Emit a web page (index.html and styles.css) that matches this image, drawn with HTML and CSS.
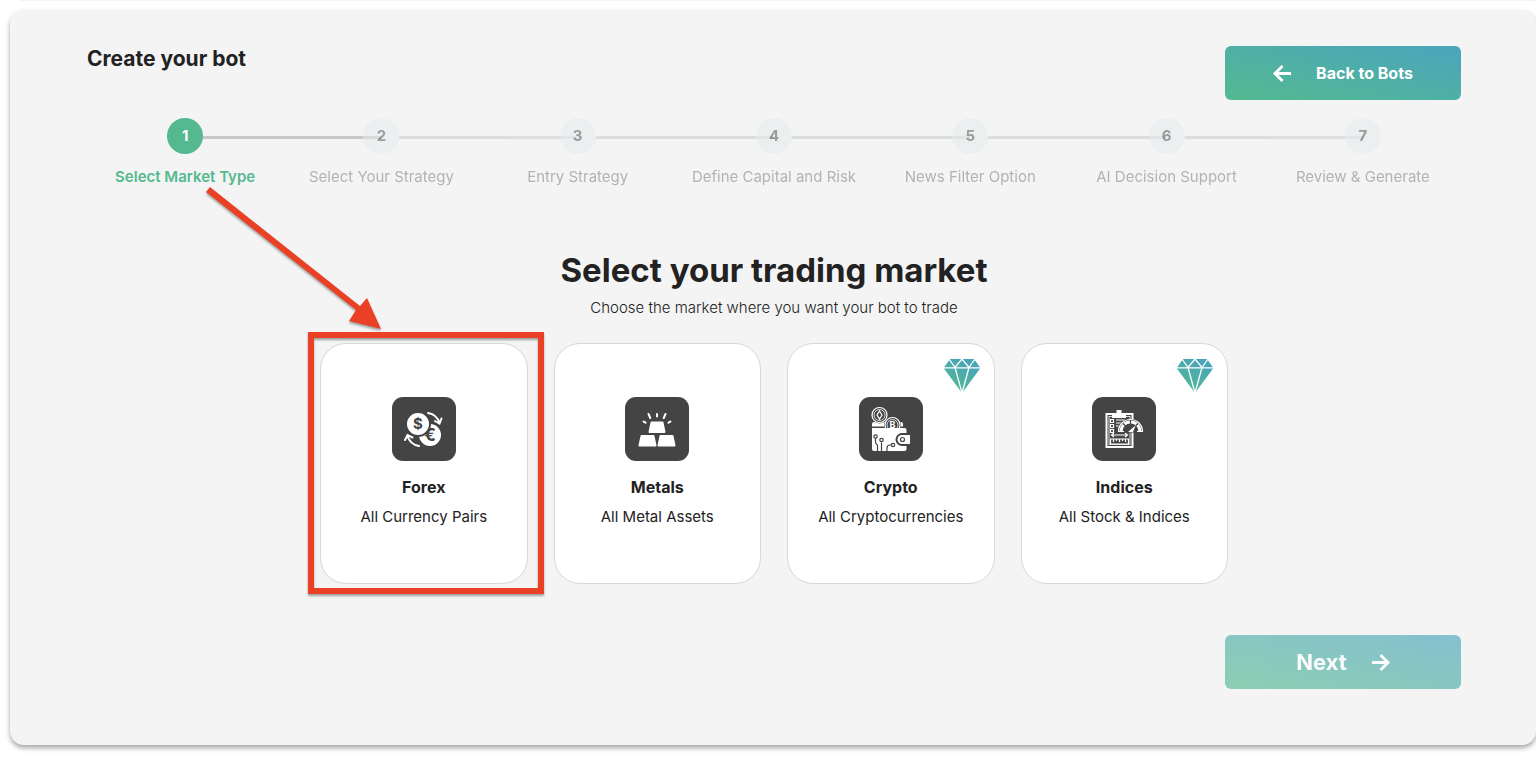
FILE: index.html
```html
<!DOCTYPE html>
<html lang="en">
<head>
    <meta charset="UTF-8">
    <meta name="viewport" content="width=device-width, initial-scale=1.0">
    <title>Create your bot</title>
    <link rel="stylesheet" href="styles.css">
</head>
<body>
    <div class="previous-panel"></div>
    <main class="panel">
        <header class="panel-header">
            <h1>Create your bot</h1>
            <button type="button" class="btn btn-back">
                <svg class="arrow" viewBox="0 0 20 20"><path d="M19 10H2.500M10 2L2 10l8 8"/></svg>
                Back to Bots
            </button>
        </header>

        <ol class="stepper">
            <li class="step active"><span class="circle">1</span><span class="label">Select Market Type</span></li>
            <li class="step"><span class="circle">2</span><span class="label">Select Your Strategy</span></li>
            <li class="step"><span class="circle">3</span><span class="label">Entry Strategy</span></li>
            <li class="step"><span class="circle">4</span><span class="label">Define Capital and Risk</span></li>
            <li class="step"><span class="circle">5</span><span class="label">News Filter Option</span></li>
            <li class="step"><span class="circle">6</span><span class="label">AI Decision Support</span></li>
            <li class="step"><span class="circle">7</span><span class="label">Review &amp; Generate</span></li>
        </ol>

        <section class="market">
            <h2>Select your trading market</h2>
            <p>Choose the market where you want your bot to trade</p>

            <div class="cards">
                <div class="card-wrap">
                    <button type="button" class="card">
                        <svg class="icon" viewBox="0 0 64 64">
                            <circle class="fill" cx="38" cy="38" r="11"/>
                            <text class="dark" x="38" y="44" font-size="17">€</text>
                            <circle class="fill gap" cx="26" cy="27" r="12"/>
                            <text class="dark" x="26" y="32" font-size="15">$</text>
                            <path class="line thick" d="M36 16c6 1 10 5 11.500 10M43 24l4.500 2.500 2-5M27 49c-6-1-10-5-11.500-10M13 43l2.500-5 5 2.500"/>
                        </svg>
                        <strong>Forex</strong>
                        <span>All Currency Pairs</span>
                    </button>
                    <div class="highlight"></div>
                    <svg class="pointer" viewBox="0 0 200 170">
                        <path d="M10 7L6 12L156 130L149 141L181 149L167 118L160 126Z"/>
                    </svg>
                </div>

                <div class="card-wrap">
                    <button type="button" class="card">
                        <svg class="icon" viewBox="0 0 64 64">
                            <path class="fill round" d="M26.500 25.500h11l2 9.500h-15zM16.500 39h12l2 9.500h-16zM35.500 39h12l2 9.500h-16z"/>
                            <path class="line thick" d="M32 17v2.500M23.500 17l1.800 4M40.500 17l-1.800 4M18.500 24.500l2 1.200M45.500 24.500l-2 1.200"/>
                        </svg>
                        <strong>Metals</strong>
                        <span>All Metal Assets</span>
                    </button>
                </div>

                <div class="card-wrap">
                    <button type="button" class="card">
                        <svg class="icon" viewBox="0 0 64 64">
                            <path class="fill" d="M15 25h27q2 0 2 2v2.500H13V27q0-2 2-2z"/>
                            <circle class="back" cx="33.500" cy="28" r="8.500"/>
                            <circle class="line" cx="33.500" cy="28" r="7.500"/>
                            <circle class="line thin" cx="33.500" cy="28" r="5.500"/>
                            <text class="light" x="33.500" y="31" font-size="9">B</text>
                            <circle class="back" cx="20.500" cy="18" r="8.500"/>
                            <circle class="line" cx="20.500" cy="18" r="7.500"/>
                            <circle class="line thin" cx="20.500" cy="18" r="5.500"/>
                            <path class="line" d="M20.500 14l2.500 4-2.500 4-2.500-4z"/>
                            <path class="fill" d="M13 31h32.500q2 0 2 2v19q0 2-2 2H15q-2 0-2-2z"/>
                            <path class="fill gap" d="M43 37h9v11h-9a5.500 5.500 0 0 1 0-11z"/>
                            <path class="cut" d="M16.500 41v4q0 2 2 3v6M22.500 45.500V54M28 54v-3q0-3 3-3h1"/>
                            <circle class="cut" cx="16.500" cy="39.500" r="1.700"/>
                            <circle class="cut" cx="22.500" cy="43" r="1.700"/>
                            <circle class="cut" cx="34" cy="48" r="1.700"/>
                            <circle class="cut" cx="43.500" cy="42.500" r="2"/>
                        </svg>
                        <strong>Crypto</strong>
                        <span>All Cryptocurrencies</span>
                    </button>
                    <svg class="diamond" viewBox="0 0 38 34">
                        <defs>
                            <linearGradient id="gem" x1="0" y1="1" x2=".5" y2="0">
                                <stop offset="0" stop-color="#54ba8f"/>
                                <stop offset="1" stop-color="#4aa5b8"/>
                            </linearGradient>
                        </defs>
                        <path fill="url(#gem)" d="M7 0h24l6.500 9L19 34 .5 9z"/>
                        <path class="facets" d="M0 8.800h38M6 0l6 8.500L19 0l7 8.500L32 0M12 8.500L19 34l7-25.500"/>
                    </svg>
                </div>

                <div class="card-wrap">
                    <button type="button" class="card">
                        <svg class="icon" viewBox="0 0 64 64">
                            <rect class="line thick" x="14.500" y="17" width="26" height="33"/>
                            <rect class="line thin" x="17" y="19.500" width="21" height="28"/>
                            <path class="fill" d="M20 16h4.500v-3h5v3H34v5H20z"/>
                            <path class="line" d="M18.500 22.500h3v3h-3zM18.500 27.500h3v3h-3zM18.500 32.500h3v3h-3zM24 23h9M24 26h5M24 29h4"/>
                            <path class="line" d="M20 38h15M22 36l-2.500 2 2.500 2M33 36l2.500 2-2.500 2"/>
                            <path class="line" d="M18.500 42h18v5h-18zM21.500 42v3M24.500 42v2M27.500 42v3M30.500 42v2M33.500 42v3"/>
                            <path class="back" d="M25 35.500a13.500 13.500 0 0 1 27 0z"/>
                            <path class="line arc" d="M29 34.500a9.500 9.500 0 0 1 19 0"/>
                            <path class="line" d="M26.500 34.500a12 12 0 0 1 24 0M26 34.500h6M45 34.500h6"/>
                            <path class="cut" d="M31 26.500l3 3M38.500 23V27.500M46 26.500l-2 2"/>
                            <path class="fill" d="M43.500 28.500l-2.500 6.500h-5z"/>
                        </svg>
                        <strong>Indices</strong>
                        <span>All Stock &amp; Indices</span>
                    </button>
                    <svg class="diamond" viewBox="0 0 38 34">
                        <path fill="url(#gem)" d="M7 0h24l6.500 9L19 34 .5 9z"/>
                        <path class="facets" d="M0 8.800h38M6 0l6 8.500L19 0l7 8.500L32 0M12 8.500L19 34l7-25.500"/>
                    </svg>
                </div>
            </div>
        </section>

        <footer class="panel-footer">
            <button type="button" class="btn btn-next" disabled>
                Next
                <svg class="arrow" viewBox="0 0 20 20"><path d="M1 10h16.500M10 2l8 8-8 8"/></svg>
            </button>
        </footer>
    </main>
</body>
</html>
```
FILE: styles.css
```css
* {
    box-sizing: border-box;
}
body {
    margin: 0;
    background: #fff;
    color: #222;
    font-family: Inter, "Liberation Sans", sans-serif;
    overflow-x: hidden;
}
button {
    font-family: inherit;
    cursor: pointer;
}
.previous-panel {
    height: 1px;
    margin-left: 20px;
    background: #f4f4f4;
}
.panel {
    margin: 9px 0 16px 10px;
    padding: 36px 75px 56px 77px;
    border-radius: 14px;
    background: #f4f4f4;
    box-shadow: 0 3px 5px rgba(0, 0, 0, 0.35);
}
.panel-header {
    display: flex;
    justify-content: space-between;
    align-items: flex-start;
}
h1 {
    margin: 0;
    font-size: 21px;
    line-height: 26px;
    font-weight: 700;
}
.btn {
    display: flex;
    justify-content: center;
    align-items: center;
    gap: 24px;
    width: 236px;
    height: 54px;
    border: none;
    border-radius: 6px;
    background: linear-gradient(to top right, #54ba8f, #4aa5bd);
    color: #fff;
    font-weight: 700;
}
.btn-back {
    font-size: 16px;
}
.btn-next {
    font-size: 22px;
    opacity: 0.65;
}
.arrow {
    width: 19px;
    height: 19px;
    fill: none;
    stroke: #fff;
    stroke-width: 3;
}

/* stepper */
.stepper {
    display: grid;
    grid-template-columns: repeat(7, 1fr);
    margin: 18px 0 0;
    padding: 0;
    list-style: none;
}
.step {
    position: relative;
    display: flex;
    flex-direction: column;
    align-items: center;
    gap: 13px;
    opacity: 0.5;
}
.step.active {
    opacity: 1;
    isolation: isolate;
}
.step:not(:last-child)::after {
    content: "";
    position: absolute;
    z-index: -1;
    top: 18px;
    left: 50%;
    width: 100%;
    height: 3px;
    background: #c8c8c8;
}
.circle {
    width: 36px;
    height: 36px;
    border-radius: 50%;
    background: #e4ecee;
    color: #444;
    font-size: 15px;
    font-weight: 700;
    line-height: 36px;
    text-align: center;
}
.label {
    color: #6e7376;
    font-size: 15px;
    line-height: 20px;
    white-space: nowrap;
}
.active .circle {
    background: #54b98f;
    color: #fff;
}
.active .label {
    color: #54b98f;
    font-weight: 600;
}

/* market cards */
.market {
    margin-top: 60px;
    text-align: center;
}
h2 {
    margin: 0;
    font-size: 33px;
    line-height: 46px;
    font-weight: 700;
}
.market p {
    margin: 5px 0 0;
    font-size: 15px;
    line-height: 20px;
    font-weight: 300;
}
.cards {
    display: grid;
    grid-template-columns: repeat(4, 1fr);
    gap: 26px;
    max-width: 908px;
    margin: 25px auto 0;
}
.card-wrap {
    position: relative;
}
.card {
    display: flex;
    flex-direction: column;
    align-items: center;
    width: 100%;
    height: 241px;
    padding: 53px 8px 0;
    border: 1px solid #d8d8d8;
    border-radius: 26px;
    background: #fff;
    color: #222;
    font-size: 15px;
    line-height: 20px;
}
.card strong {
    margin: 16px 0 10px;
    font-size: 16px;
    font-weight: 700;
}
.icon {
    width: 64px;
    height: 64px;
    border-radius: 11px;
    background: #444;
}
.icon .fill,
.icon .light {
    fill: #fff;
}
.icon .back,
.icon .dark {
    fill: #444;
}
.icon text {
    font-weight: 700;
    text-anchor: middle;
}
.icon .gap {
    stroke: #444;
    stroke-width: 2;
}
.icon .round {
    stroke: #fff;
    stroke-width: 2;
    stroke-linejoin: round;
}
.icon .line,
.icon .cut {
    fill: none;
    stroke: #fff;
    stroke-width: 1.2;
}
.icon .thick {
    stroke-width: 2;
    stroke-linecap: round;
}
.icon .thin {
    stroke-width: 0.8;
}
.icon .arc {
    stroke-width: 3;
}
.icon .cut {
    stroke: #444;
}
.diamond {
    position: absolute;
    top: 16px;
    right: 14px;
    width: 38px;
    height: 34px;
}
.facets {
    fill: none;
    stroke: #fff;
    stroke-width: 1.3;
}
.highlight {
    position: absolute;
    inset: -11px -16px -10px -12px;
    border: 6px solid #ea4025;
    filter: drop-shadow(0 2px 1px rgba(0, 0, 0, 0.35));
    pointer-events: none;
}
.pointer {
    position: absolute;
    top: -163px;
    left: -120px;
    width: 200px;
    height: 170px;
    fill: #ea4025;
    filter: drop-shadow(0 2px 1px rgba(0, 0, 0, 0.35));
    pointer-events: none;
}
.panel-footer {
    display: flex;
    justify-content: flex-end;
    margin-top: 51px;
}
```
